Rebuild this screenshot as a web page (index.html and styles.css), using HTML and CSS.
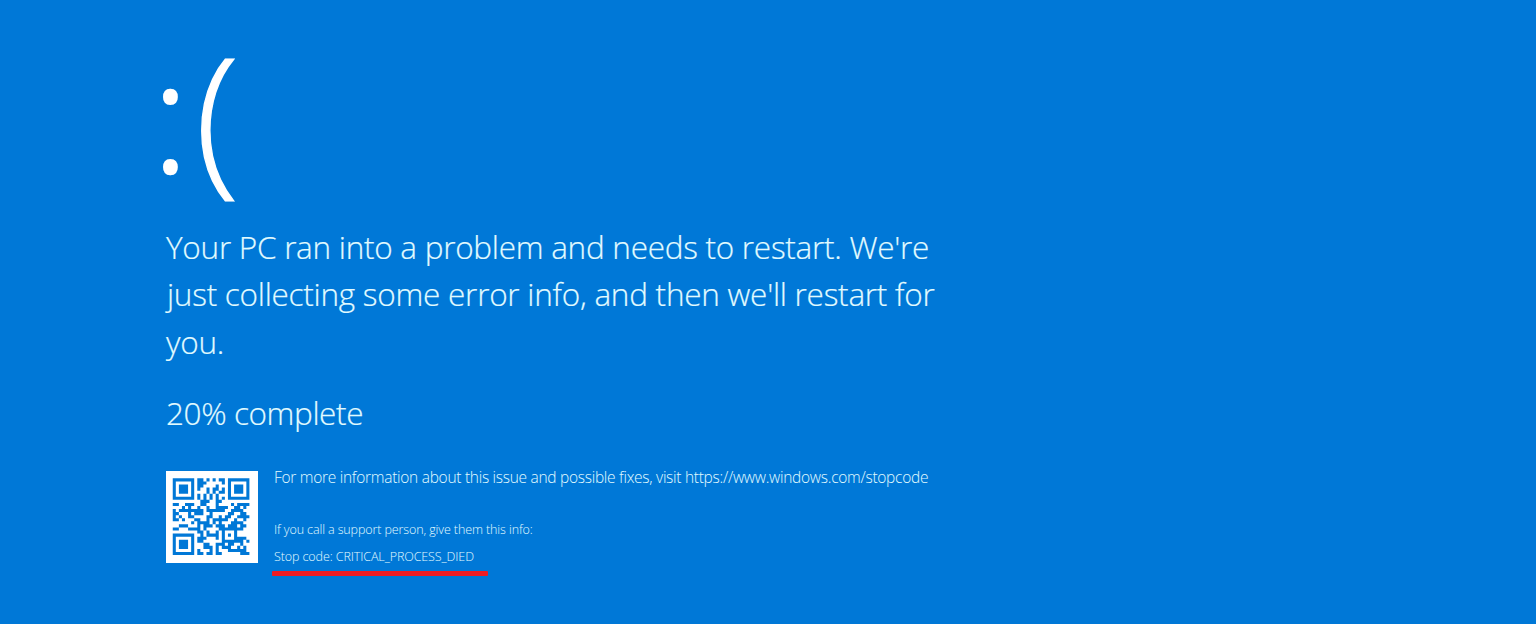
FILE: index.html
```html
<!DOCTYPE html>
<html lang="en">
<head>
<meta charset="utf-8">
<title>Stop error</title>
<link rel="stylesheet" href="styles.css">
</head>
<body>
<main class="screen">
  <div class="face"><span class="eyes">:</span><span class="mouth">(</span></div>
  <p class="message">Your PC ran into a problem and needs to restart. We're<br><span class="indent">just collecting some error info, and then we'll restart for</span><br>you.</p>
  <p class="progress">20% complete</p>
  <section class="details">
    <svg class="qr" viewBox="-2.2 -2.4 30 30"><path id="modules"/></svg>
    <div class="info">
      <p class="more">For more information about this issue and possible fixes, visit https://www.windows.com/stopcode</p>
      <p class="support">If you call a support person, give them this info:</p>
      <p class="code">Stop code: CRITICAL_PROCESS_DIED</p>
      <div class="underline"></div>
    </div>
  </section>
</main>
<script src="qr.js"></script>
</body>
</html>
```
FILE: styles.css
```css
* { box-sizing: border-box; }
body {
  margin: 0;
  background: #0078d7;
  color: #e2fbff;
  font-family: "Open Sans", "Noto Sans", sans-serif;
  font-weight: 300;
}
p { margin: 0; white-space: nowrap; }
.screen { height: 624px; padding: 37px 0 0 166px; overflow: hidden; }
.face {
  display: flex;
  height: 186px;
  margin-left: -14px;
  font-size: 163px;
  line-height: 150px;
  color: #fff;
}
.eyes { width: 41px; font-size: 154px; -webkit-text-stroke: 2.6px #fff; }
.mouth { margin-left: 2px; -webkit-text-stroke: 1.2px #fff; }
.message {
  font-size: 31.5px;
  line-height: 47.4px;
  letter-spacing: -0.27px;
  -webkit-text-stroke: 0.2px #e2fbff;
}
.indent { margin-left: 1px; letter-spacing: -0.25px; }
.progress {
  font-size: 31.5px;
  line-height: 47px;
  margin-top: 24px;
  letter-spacing: -0.4px;
  -webkit-text-stroke: 0.2px #e2fbff;
}
.details { display: flex; gap: 16px; margin-top: 35px; }
.qr { flex: none; width: 92px; height: 92px; background: #fff; fill: #0078d7; }
.info { margin-top: -4px; }
.more { font-size: 15.5px; line-height: 20px; letter-spacing: -0.28px; }
.support { font-size: 12.5px; line-height: 20px; margin-top: 33px; letter-spacing: -0.11px; }
.code { font-size: 12.5px; line-height: 20px; margin-top: 7px; letter-spacing: -0.1px; }
.underline {
  width: 216px;
  height: 5px;
  margin: 4px 0 0 -2px;
  border-radius: 1px;
  background: #ed1c24;
}
```
FILE: qr.js
```js
// Version 2-L QR code: 25 modules, 34 data bytes, 10 error correction bytes.
const SIZE = 25;
const MASK = 4;

function gfMul(a, b) {
  let r = 0;
  for (; b; b >>= 1) {
    if (b & 1) r ^= a;
    a = (a << 1) ^ (a & 128 ? 0x11d : 0);
  }
  return r;
}

function errorBytes(data, degree) {
  const gen = new Array(degree).fill(0);
  gen[degree - 1] = 1;
  let root = 1;
  for (let i = 0; i < degree; i++) {
    for (let j = 0; j < degree; j++) gen[j] = gfMul(gen[j], root) ^ (gen[j + 1] || 0);
    root = gfMul(root, 2);
  }
  const rem = new Array(degree).fill(0);
  for (const b of data) {
    const f = b ^ rem.shift();
    rem.push(0);
    gen.forEach((g, i) => { rem[i] ^= gfMul(g, f); });
  }
  return rem;
}

function encode(text) {
  let bits = "0100" + text.length.toString(2).padStart(8, "0");
  for (const c of text) bits += c.charCodeAt(0).toString(2).padStart(8, "0");
  bits += "0000";
  const data = bits.match(/.{8}/g).map(b => parseInt(b, 2));
  for (let pad = 0xec; data.length < 34; pad ^= 0xfd) data.push(pad);
  return data.concat(errorBytes(data, 10));
}

function build(text) {
  const m = Array.from({ length: SIZE }, () => new Array(SIZE).fill(null));
  const set = (x, y, v) => { if (m[y] && x >= 0 && x < SIZE) m[y][x] = v ? 1 : 0; };

  // Timing, finder and alignment patterns
  for (let i = 0; i < SIZE; i++) { set(6, i, i % 2 === 0); set(i, 6, i % 2 === 0); }
  for (const [cx, cy] of [[3, 3], [21, 3], [3, 21]])
    for (let dy = -4; dy <= 4; dy++)
      for (let dx = -4; dx <= 4; dx++) {
        const d = Math.max(Math.abs(dx), Math.abs(dy));
        set(cx + dx, cy + dy, d !== 2 && d !== 4);
      }
  for (let dy = -2; dy <= 2; dy++)
    for (let dx = -2; dx <= 2; dx++)
      set(18 + dx, 18 + dy, Math.max(Math.abs(dx), Math.abs(dy)) !== 1);

  // Format information
  const fmt = 8 | MASK;
  let rem = fmt;
  for (let i = 0; i < 10; i++) rem = (rem << 1) ^ ((rem >> 9) * 0x537);
  const f = ((fmt << 10) | rem) ^ 0x5412;
  const bit = i => (f >> i) & 1;
  for (let i = 0; i < 6; i++) set(8, i, bit(i));
  set(8, 7, bit(6)); set(8, 8, bit(7)); set(7, 8, bit(8));
  for (let i = 9; i < 15; i++) set(14 - i, 8, bit(i));
  for (let i = 0; i < 8; i++) set(SIZE - 1 - i, 8, bit(i));
  for (let i = 8; i < 15; i++) set(8, SIZE - 15 + i, bit(i));
  set(8, SIZE - 8, 1);

  // Data, zigzagging up and down in two-column strips
  const bytes = encode(text);
  let n = 0;
  for (let right = SIZE - 1; right >= 1; right -= 2) {
    if (right === 6) right = 5;
    for (let v = 0; v < SIZE; v++)
      for (let j = 0; j < 2; j++) {
        const x = right - j;
        const y = ((right + 1) & 2) === 0 ? SIZE - 1 - v : v;
        if (m[y][x] !== null) continue;
        const b = n < 352 ? (bytes[n >> 3] >> (7 - (n & 7))) & 1 : 0;
        n++;
        const flip = (Math.floor(x / 3) + Math.floor(y / 2)) % 2 === 0;
        m[y][x] = b ^ (flip ? 1 : 0);
      }
  }
  return m;
}

let d = "";
build("https://www.windows.com/stopcode").forEach((row, y) =>
  row.forEach((v, x) => { if (v) d += `M${x} ${y}h1v1h-1z`; }));
document.getElementById("modules").setAttribute("d", d);
```
